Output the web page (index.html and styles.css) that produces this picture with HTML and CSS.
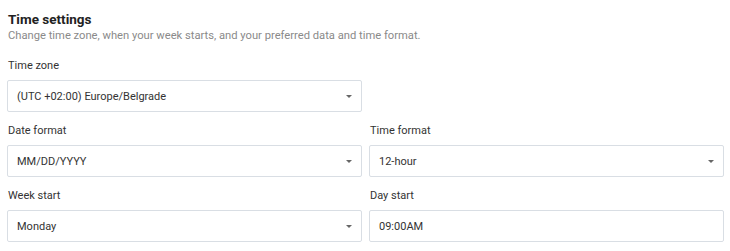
FILE: index.html
```html
<!DOCTYPE html>
<html>
<head>
    <meta charset="utf-8">
    <title>Time settings</title>
    <link rel="stylesheet" href="styles.css">
</head>
<body>
    <section class="settings">
        <h2 class="settings-title">Time settings</h2>
        <p class="settings-desc">Change time zone, when your week starts, and your preferred data and time format.</p>

        <div class="fields">
            <div class="field">
                <label class="field-label">Time zone</label>
                <div class="select">
                    <span>(UTC +02:00) Europe/Belgrade</span>
                    <span class="caret"></span>
                </div>
            </div>
            <div></div>

            <div class="field">
                <label class="field-label">Date format</label>
                <div class="select">
                    <span>MM/DD/YYYY</span>
                    <span class="caret"></span>
                </div>
            </div>
            <div class="field">
                <label class="field-label">Time format</label>
                <div class="select">
                    <span>12-hour</span>
                    <span class="caret"></span>
                </div>
            </div>

            <div class="field">
                <label class="field-label">Week start</label>
                <div class="select">
                    <span>Monday</span>
                    <span class="caret"></span>
                </div>
            </div>
            <div class="field">
                <label class="field-label">Day start</label>
                <div class="select">
                    <span>09:00AM</span>
                </div>
            </div>
        </div>
    </section>
</body>
</html>
```

FILE: styles.css
```css
body {
    margin: 0;
    background: #fff;
    font-family: Roboto, 'Liberation Sans', sans-serif;
    color: #333;
}

.settings {
    padding: 10px 6px 0 7px;
}

.settings-title {
    margin: 0 0 0 1px;
    font-size: 13.5px;
    line-height: 18px;
    font-weight: 700;
    color: #222;
}

.settings-desc {
    margin: 0 0 14px 1px;
    font-size: 11.2px;
    line-height: 16px;
    color: #8a8a8a;
}

.fields {
    display: grid;
    grid-template-columns: 1fr 1fr;
    column-gap: 7px;
    row-gap: 11px;
}

.field {
    display: flex;
    flex-direction: column;
    gap: 6px;
}

.field-label {
    padding-left: 1px;
    font-size: 11px;
    line-height: 16px;
    color: #333;
}

.select {
    height: 32px;
    box-sizing: border-box;
    display: flex;
    align-items: center;
    justify-content: space-between;
    padding: 0 9px 0 9px;
    border: 1px solid #d9dee4;
    border-radius: 2px;
    font-size: 11px;
    color: #333;
}

.caret {
    width: 0;
    height: 0;
    border-left: 3.5px solid transparent;
    border-right: 3.5px solid transparent;
    border-top: 3.5px solid #666;
}
```
